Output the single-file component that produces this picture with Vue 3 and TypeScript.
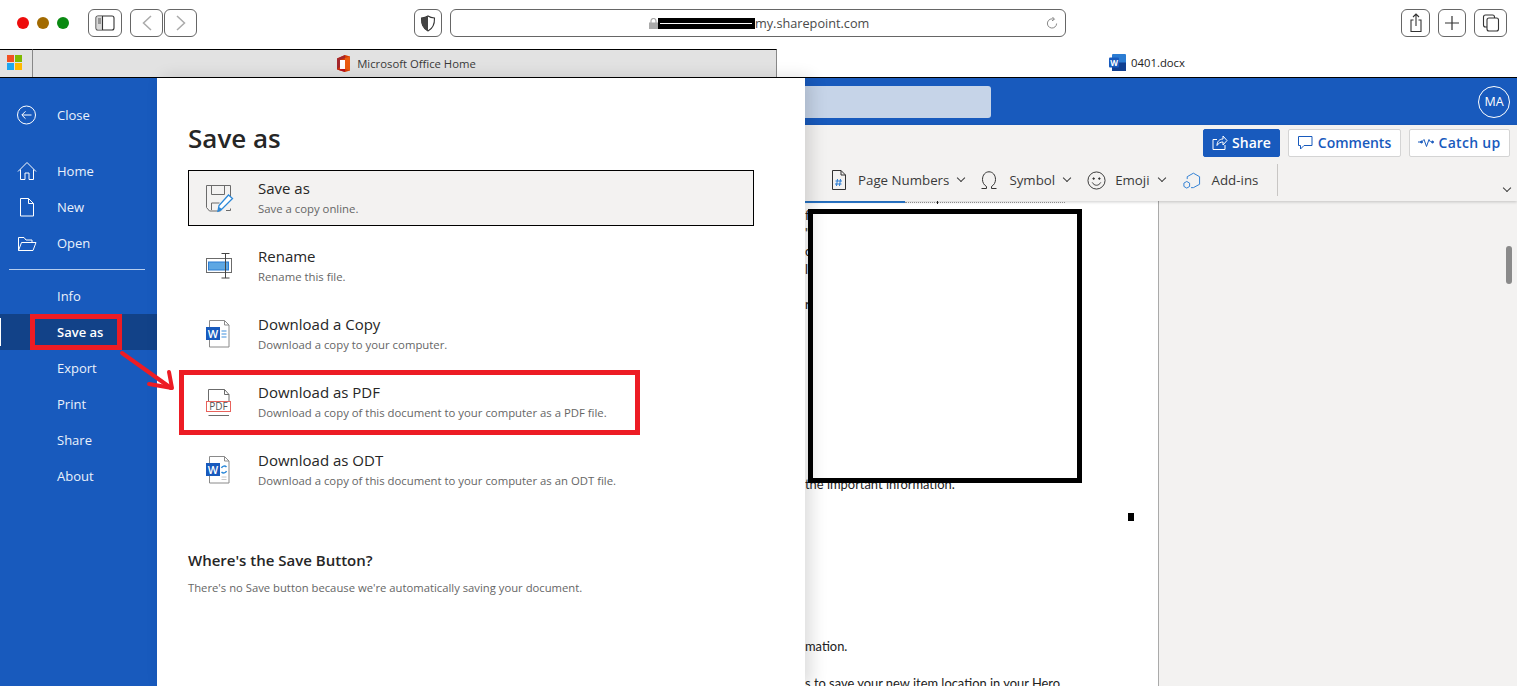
<script setup lang="ts">
const navTop = ['Home', 'New', 'Open']
const navBottom = ['Info', 'Save as', 'Export', 'Print', 'Share', 'About']
const options = [
  { id: 'save', title: 'Save as', sub: 'Save a copy online.' },
  { id: 'rename', title: 'Rename', sub: 'Rename this file.' },
  { id: 'copy', title: 'Download a Copy', sub: 'Download a copy to your computer.' },
  { id: 'pdf', title: 'Download as PDF', sub: 'Download a copy of this document to your computer as a PDF file.' },
  { id: 'odt', title: 'Download as ODT', sub: 'Download a copy of this document to your computer as an ODT file.' },
]
</script>

<template>
  <div class="page">
    <header class="chrome">
      <div class="lights">
        <span class="light red"></span>
        <span class="light amber"></span>
        <span class="light green"></span>
      </div>
      <button class="cbtn sidebar-btn" aria-label="Sidebar">
        <svg width="20" height="16" viewBox="0 0 20 16" fill="none">
          <rect x="1" y="1" width="18" height="14" rx="2" stroke="#333" stroke-width="1.1" />
          <rect x="1.5" y="1.5" width="6" height="13" fill="#d8d8d8" />
          <path d="M7.5 1v14" stroke="#333" stroke-width="1.1" />
          <path d="M3 4h3M3 6h3M3 8h3" stroke="#555" />
        </svg>
      </button>
      <div class="nav-pair">
        <button class="cbtn arrow-btn" aria-label="Back">
          <svg width="12" height="18" viewBox="0 0 12 18" fill="none"><path d="M10 2 2.500 9l7.500 7" stroke="#aaa" stroke-width="1.5" /></svg>
        </button>
        <button class="cbtn arrow-btn" aria-label="Forward">
          <svg width="12" height="18" viewBox="0 0 12 18" fill="none"><path d="M2 2l7.500 7L2 16" stroke="#aaa" stroke-width="1.5" /></svg>
        </button>
      </div>
      <button class="cbtn shield-btn" aria-label="Privacy">
        <svg width="16" height="17" viewBox="0 0 16 17" fill="none">
          <path d="M8 1c2 1.300 4 1.800 6.500 2 .2 6-1.500 10.500-6.500 13C3 13.500 1.300 9 1.500 3 4 2.800 6 2.300 8 1Z" stroke="#333" stroke-width="1.100" />
          <path d="M8 1C6 2.300 4 2.800 1.500 3 1.300 9 3 13.500 8 16V1Z" fill="#444" />
        </svg>
      </button>
      <div class="urlbar">
        <span class="url">
          <svg class="lock" width="9" height="11" viewBox="0 0 9 11"><path d="M2 5V3a2.500 2.500 0 0 1 5 0v2" fill="none" stroke="#aaa" stroke-width="1.200" /><rect y="4.500" width="9" height="6.500" fill="#aaa" /></svg>
          <span class="redact"><i></i></span><span class="host">my.sharepoint.com</span>
        </span>
        <svg class="reload" width="12" height="14" viewBox="0 0 12 14" fill="none">
          <path d="M8 3.300A4.600 4.600 0 1 0 10.600 7.500" stroke="#888" stroke-width="1" />
          <path d="M6.500 1 8.500 3.300 6 4.800" stroke="#888" stroke-width="1" />
        </svg>
      </div>
      <div class="chrome-right">
        <button class="cbtn tall" aria-label="Share">
          <svg width="14" height="20" viewBox="0 0 14 20" fill="none">
            <path d="M4.500 7H2v11.500h10V7H9.500M7 13V1.500M4 4l3-3 3 3" stroke="#333" stroke-width="1.100" />
          </svg>
        </button>
        <button class="cbtn plus" aria-label="New tab">
          <svg width="14" height="14" viewBox="0 0 14 14" fill="none"><path d="M7 0v14M0 7h14" stroke="#333" stroke-width="1.200" /></svg>
        </button>
        <button class="cbtn tabs-btn" aria-label="Tabs">
          <svg width="18" height="18" viewBox="0 0 18 18" fill="none">
            <rect x="1.500" y="1" width="11" height="12" rx="2" stroke="#333" stroke-width="1.100" />
            <rect x="5" y="4" width="11.500" height="13" rx="2" fill="#fff" stroke="#333" stroke-width="1.100" />
          </svg>
        </button>
      </div>
    </header>

    <div class="tabstrip">
      <div class="ms-logo" aria-label="Microsoft">
        <i class="q1"></i><i class="q2"></i><i class="q3"></i><i class="q4"></i>
      </div>
      <div class="tab inactive">
        <svg width="13" height="17" viewBox="0 0 13 17">
          <path d="M0 3.500 8 0l5 1.500v14L8 17l-8-2.500Z" fill="#d83b01" />
          <path d="M0 3.500 8 0v3L3 5v7l-3 2.500Z" fill="#a4262c" />
          <path d="M8 17l-8-2.500L8 14Z" fill="#b7121f" />
          <path d="M3 5h5v9H3Z" fill="#fff" />
          <path d="M8 3v11l5 1.500v-14Z" fill="#ea5b10" />
        </svg>
        <span>Microsoft Office Home</span>
      </div>
      <div class="tab active">
        <svg width="17" height="17" viewBox="0 0 17 17">
          <rect x="3" y="0" width="14" height="17" rx="1" fill="#2b7cd3" />
          <rect x="3" y="8.500" width="14" height="8.500" fill="#103f91" />
          <rect x="0" y="3.500" width="10" height="10" rx="1" fill="#185abd" />
          <text x="5" y="11.500" class="w-letter" text-anchor="middle">W</text>
        </svg>
        <span>0401.docx</span>
      </div>
    </div>

    <main class="workspace">
      <nav class="sidenav">
        <div class="nav-row close-row">
          <svg class="nav-icon" width="24" height="24" viewBox="0 0 24 24" fill="none" stroke="#fff">
            <circle cx="11.500" cy="12" r="9" />
            <path d="M16.500 12H7M10.500 8.300 6.800 12l3.700 3.700" />
          </svg>
          <span>Close</span>
        </div>
        <div v-for="n in navTop" :key="n" class="nav-row">
          <svg class="nav-icon" width="24" height="24" viewBox="0 0 24 24" fill="none" stroke="#fff">
            <path v-if="n === 'Home'" d="M3 12.500 12 3.500l9 9M5.500 10.500V20.500h4.500v-6.500h4v6.500h4.500V10.500" />
            <path v-else-if="n === 'New'" d="M5.500 3.500h8l5 5v12.500h-13ZM13.500 3.500v5h5" />
            <path v-else d="M3.500 19.500V6.500h5.500l2 2.500h6v2.500M3.500 19.500l3-8h14.500l-3 8Z" />
          </svg>
          <span>{{ n }}</span>
        </div>
        <hr class="nav-rule" />
        <div v-for="n in navBottom" :key="n" class="nav-row" :class="{ selected: n === 'Save as' }">
          <span class="nav-spacer"></span>
          <span>{{ n }}</span>
        </div>
      </nav>

      <section class="panel">
        <h1>Save as</h1>
        <ul class="options">
          <li v-for="o in options" :key="o.id" class="option" :class="{ current: o.id === 'save' }">
            <svg class="opt-icon" width="32" height="32" viewBox="0 0 32 32" fill="none">
              <g v-if="o.id === 'save'">
                <path d="M3.500 3.500h24v13M23 28.500h4.500v-2M3.500 3.500v22l3 3.500h11" stroke="#6b6b6b" />
                <path d="M8.500 3.500v9h13v-9M8.500 28v-7h8" stroke="#6b6b6b" />
                <path d="M15 29l1-5.500L25.500 13l4 3.500-10 10Z" fill="#fff" stroke="#2b88d8" stroke-width="1.300" />
                <path d="M14.500 30l2-5 3 3Z" fill="#2b88d8" />
              </g>
              <g v-else-if="o.id === 'rename'">
                <rect x="3.500" y="8.500" width="25" height="14" stroke="#6b6b6b" fill="#fff" />
                <rect x="5.500" y="12" width="20" height="8" fill="#5ea7e3" stroke="#2b7cd3" />
                <path d="M22.500 3.500v24.500M18.500 3.500h8M18.500 28h8" stroke="#444" />
              </g>
              <g v-else-if="o.id === 'pdf'">
                <path d="M5.500 15V3.500h16l4.500 5V15M21.500 3.500v5h4.500M5.500 29.500h20.500" stroke="#6b6b6b" />
                <rect x="3.500" y="15.500" width="24" height="10" fill="#fff" stroke="#e8625c" />
                <text x="15.500" y="24" class="pdf-letters" text-anchor="middle">PDF</text>
              </g>
              <g v-else>
                <path d="M6.500 2.500h15l4.500 4.500v22h-19.500ZM21.500 2.500v4.500h4.500" stroke="#8a8a8a" fill="#fff" />
                <rect x="3" y="9" width="14" height="13" fill="#185abd" />
                <text x="10" y="19.500" class="word-letter" text-anchor="middle">W</text>
                <path v-if="o.id === 'copy'" d="M18.500 13h5M18.500 16h5M18.500 19h5" stroke="#3f8fdc" />
                <g v-else>
                  <path d="M18.500 14a3 3 0 0 1 5-1M23.500 17a3 3 0 0 1-5 1" stroke="#2b88d8" stroke-width="1.400" />
                  <path d="M18.500 23h5M18.500 25.500h5" stroke="#c8c8c8" />
                </g>
              </g>
            </svg>
            <div class="opt-text">
              <div class="opt-title">{{ o.title }}</div>
              <div class="opt-sub">{{ o.sub }}</div>
            </div>
          </li>
        </ul>
        <h2>Where's the Save Button?</h2>
        <p>There's no Save button because we're automatically saving your document.</p>
      </section>

      <section class="word">
        <div class="appbar">
          <div class="search"></div>
          <div class="avatar">MA</div>
        </div>
        <div class="ribbon">
          <div class="actions">
            <button class="act primary">
              <svg width="16" height="18" viewBox="0 0 16 18" fill="none" stroke="#fff">
                <path d="M5 6.500H1v10h12V12M5 12.500C5 8.500 7.500 6 11 6V3l4 4.500L11 12V9c-2.500 0-4.500 1-6 3.500Z" />
              </svg>
              Share
            </button>
            <button class="act comments">
              <svg width="15" height="15" viewBox="0 0 15 15" fill="none" stroke="#185abd">
                <path d="M.5 1.500h13.500v9H6L2.500 14v-3.500H.5Z" />
              </svg>
              Comments
            </button>
            <button class="act catchup">
              <svg width="16" height="12" viewBox="0 0 16 12" fill="none" stroke="#185abd">
                <path d="M0 6h3M4 5.500l2-2 2.500 7 2.500-7 1.500 2.500" />
                <circle cx="3.500" cy="6" r="1" fill="#185abd" />
                <circle cx="14.500" cy="6" r="1" fill="#185abd" />
              </svg>
              Catch up
            </button>
          </div>
          <div class="tools">
            <div class="tool">
              <svg class="ic-page" width="16" height="20" viewBox="0 0 16 20" fill="none">
                <path d="M1.500 .500h8.500l4.500 4.500v14.500h-13ZM10 .500v4.500h4.500" stroke="#333" />
                <path d="M6.500 9l-1 7M9.500 9l-1 7M4.500 11h6.500M4 14h6.500" stroke="#2b7cd3" />
              </svg>
              <span>Page Numbers</span><i class="chev"></i>
            </div>
            <div class="tool">
              <svg class="ic-omega" width="16" height="18" viewBox="0 0 16 18" fill="none" stroke="#333">
                <path d="M.5 17.500h5v-2C3 14 1.500 11.500 1.500 8.500 1.500 4 4.300 .8 8 .8s6.500 3.200 6.500 7.700c0 3-1.500 5.500-4 7v2h5" />
              </svg>
              <span>Symbol</span><i class="chev"></i>
            </div>
            <div class="tool">
              <svg class="ic-emoji" width="19" height="19" viewBox="0 0 20 20" fill="none" stroke="#333">
                <circle cx="10" cy="10" r="9" />
                <circle cx="7" cy="8" r=".8" fill="#333" /><circle cx="13" cy="8" r=".8" fill="#333" />
                <path d="M5.500 12c1.200 2 2.700 3 4.500 3s3.300-1 4.500-3" />
              </svg>
              <span>Emoji</span><i class="chev"></i>
            </div>
            <div class="tool">
              <svg class="ic-addin" width="19" height="19" viewBox="0 0 20 20" fill="none" stroke="#2b7cd3">
                <path d="M5.500 8.500V6L12 2.300 18.500 6v8L12 17.500H9.500" />
                <path d="M5 11l3 1.750v3.500L5 18l-3-1.750v-3.500Z" />
              </svg>
              <span>Add-ins</span>
            </div>
            <span class="tool-sep"></span>
            <i class="chev collapse"></i>
          </div>
        </div>
        <div class="docarea">
          <div class="docpage">
            <div class="link-stub"></div>
            <div class="dotted-stub"></div>
            <div class="tick"></div>
            <div class="line first">f</div>
            <div class="line">"</div>
            <div class="line">c</div>
            <div class="line">li</div>
            <div class="line gap-small">r</div>
            <div class="line gap-large">the important information.</div>
            <div class="marker"></div>
            <div class="line gap-mation">mation.</div>
            <div class="line gap-two">s to save your new item location in your Hero</div>
            <div class="redaction"></div>
          </div>
          <aside class="rail"><span class="thumb"></span></aside>
        </div>
      </section>
    </main>

    <div class="mark mark-nav"></div>
    <div class="mark mark-pdf"></div>
    <svg class="mark-arrow" width="64" height="50" viewBox="0 0 64 50" fill="none" stroke="#ed1c24" stroke-width="4" stroke-linecap="round" stroke-linejoin="round">
      <path d="M3 3 52 38" />
      <path d="M50 22 53 38 30 34" />
    </svg>
  </div>
</template>

<style>
html, body { margin: 0; background: #fff; overflow: hidden; }
</style>

<style scoped>
.page {
  position: relative;
  width: 1517px;
  height: 686px;
  overflow: hidden;
  display: flex;
  flex-direction: column;
  font-family: "Open Sans", "Noto Sans", sans-serif;
  color: #262626;
  background: #fff;
}
button { font-family: inherit; background: #fff; padding: 0; }

.chrome {
  height: 49px;
  flex: none;
  display: flex;
  align-items: flex-start;
  padding-top: 9px;
  box-sizing: border-box;
  background: #fff;
}
.lights { display: flex; gap: 8px; margin: 8px 0 0 17px; }
.light { width: 12px; height: 12px; border-radius: 50%; }
.red { background: #ee0c0c; }
.amber { background: #a26a00; }
.green { background: #0a8a12; }
.cbtn {
  height: 28px;
  box-sizing: border-box;
  border: 1px solid #666;
  border-radius: 6px;
  display: flex;
  align-items: center;
  justify-content: center;
}
.sidebar-btn { width: 34px; margin-left: 19px; }
.nav-pair { display: flex; margin-left: 8px; gap: 1px; }
.arrow-btn { width: 33px; }
.shield-btn { width: 28px; margin-left: 217px; }
.urlbar {
  width: 616px;
  height: 28px;
  box-sizing: border-box;
  margin-left: 8px;
  border: 1px solid #666;
  border-radius: 6px;
  display: flex;
  align-items: center;
  position: relative;
}
.url {
  margin-left: 198px;
  display: flex;
  align-items: center;
  font-size: 12.700px;
  color: #4a4a4a;
  line-height: 16px;
}
.lock { margin-right: 0; }
.redact {
  width: 97px;
  height: 11px;
  background: #000;
  display: flex;
  align-items: center;
}
.redact i { display: block; width: 92px; height: 1px; margin-left: 2px; background: #fff; }
.reload { position: absolute; right: 7px; top: 6px; }
.chrome-right { display: flex; gap: 8px; margin-left: 335px; }
.tall { width: 29px; }
.plus { width: 28px; }
.tabs-btn { width: 33px; }

.tabstrip {
  height: 29px;
  flex: none;
  box-sizing: border-box;
  display: flex;
  border-bottom: 1px solid #000;
  position: relative;
}
.ms-logo {
  width: 33px;
  box-sizing: border-box;
  background: #e2e2e2;
  border-top: 1px solid #000;
  border-right: 1px solid #888;
  display: grid;
  grid-template-columns: 7px 7px;
  grid-auto-rows: 7px;
  gap: 1px;
  padding: 5px 0 0 7px;
}
.ms-logo i { display: block; }
.q1 { background: #f25022; }
.q2 { background: #7fba00; }
.q3 { background: #1ea7f0; }
.q4 { background: #ffb900; }
.tab {
  display: flex;
  align-items: center;
  justify-content: center;
  gap: 7px;
  font-size: 11.300px;
  color: #3a3a3a;
  box-sizing: border-box;
  padding-bottom: 1px;
}
.tab.inactive {
  width: 744px;
  background: #e2e2e2;
  border-top: 1px solid #000;
  border-right: 1px solid #888;
  padding-left: 4px;
}
.tab.active { flex: 1; gap: 5px; color: #222; }
.w-letter { font: 700 8px "Open Sans", sans-serif; fill: #fff; }

.workspace { flex: 1; display: flex; min-height: 0; }

.sidenav {
  width: 157px;
  flex: none;
  background: #185abd;
  color: #fff;
  padding-top: 19px;
  box-sizing: border-box;
  font-size: 13px;
}
.nav-row {
  height: 36px;
  display: flex;
  align-items: center;
  padding-left: 15px;
  gap: 18px;
  color: #eaf1fb;
  box-sizing: border-box;
  position: relative;
}
.close-row { margin-bottom: 20px; }
.nav-icon { flex: none; }
.nav-spacer { width: 24px; flex: none; }
.nav-rule { border: 0; height: 1px; background: #b6cdee; margin: 8px 12px 8px 9px; }
.nav-row.selected {
  background: #124288;
  color: #fff;
  font-weight: 600;
}
.nav-row.selected::before {
  content: "";
  position: absolute;
  left: 0;
  top: 4px;
  bottom: 4px;
  width: 1px;
  background: #fff;
}

.panel {
  width: 648px;
  flex: none;
  background: #fff;
  padding: 0 0 0 31px;
  box-sizing: border-box;
  position: relative;
  z-index: 3;
  box-shadow: 6px 0 16px rgba(0, 0, 0, 0.14);
}
h1 { font-size: 26px; font-weight: 600; margin: 43px 0 14px; line-height: 35px; color: #262626; }
.options { list-style: none; margin: 0; padding: 0; display: flex; flex-direction: column; gap: 12px; width: 566px; }
.option {
  height: 56px;
  box-sizing: border-box;
  display: flex;
  align-items: center;
  padding-left: 15px;
  gap: 23px;
}
.option.current { background: #f3f2f1; border: 1px solid #000; padding-left: 14px; }
.opt-icon { flex: none; }
.opt-title { font-size: 15px; line-height: 20px; color: #262626; position: relative; top: -1px; }
.opt-sub { font-size: 11.350px; line-height: 16px; margin-top: 2px; color: #666; }
.pdf-letters { font: 400 10px "Open Sans", sans-serif; fill: #555; }
.word-letter { font: 600 11px "Open Sans", sans-serif; fill: #fff; }
h2 { font-size: 15px; font-weight: 600; margin: 52px 0 0; line-height: 20px; color: #262626; }
p { font-size: 11.270px; line-height: 16px; margin: 10px 0 0; color: #666; }

.word { flex: 1; min-width: 0; display: flex; flex-direction: column; }
.appbar {
  height: 47px;
  flex: none;
  background: #185abd;
  display: flex;
  align-items: center;
  justify-content: space-between;
  padding-right: 7px;
  box-sizing: border-box;
}
.search { width: 186px; height: 32px; background: #c6d4e8; border-radius: 0 3px 3px 0; }
.avatar {
  width: 32px;
  height: 32px;
  box-sizing: border-box;
  border: 1px solid #fff;
  border-radius: 50%;
  color: #fff;
  font-size: 12.500px;
  display: flex;
  align-items: center;
  justify-content: center;
}
.ribbon {
  height: 76px;
  flex: none;
  background: #f3f2f1;
  box-shadow: 0 1px 3px rgba(0, 0, 0, 0.2);
  position: relative;
  z-index: 2;
}
.actions { display: flex; justify-content: flex-end; gap: 8px; padding: 4px 7px 0 0; }
.act {
  width: 113px;
  height: 28px;
  box-sizing: border-box;
  border: 1px solid #d4d4d4;
  background: #fff;
  color: #185abd;
  font-size: 14px;
  font-weight: 600;
  display: flex;
  align-items: center;
  justify-content: center;
  gap: 5px;
  border-radius: 2px;
  padding-bottom: 2px;
}
.act.primary { width: 77px; background: #185abd; border-color: #185abd; color: #fff; gap: 4px; }
.act.catchup { width: 101px; letter-spacing: 0.3px; gap: 4px; }
.tools {
  display: flex;
  align-items: center;
  height: 34px;
  margin-top: 6px;
  padding-left: 26px;
  font-size: 13.300px;
  color: #3a3a3a;
  position: relative;
}
.tool { display: flex; align-items: center; margin-right: 17px; height: 32px; }
.ic-page { margin-right: 11px; }
.ic-omega { margin-right: 12px; }
.ic-emoji { margin-right: 9px; }
.ic-addin { margin-right: 11px; }
.chev {
  display: block;
  box-sizing: border-box;
  width: 6px;
  height: 6px;
  border-right: 1px solid #333;
  border-bottom: 1px solid #333;
  transform: rotate(45deg) translate(-1.500px, -1.500px);
  margin-left: 9px;
}
.tool-sep { width: 1px; height: 32px; background: #c8c6c4; margin-left: 2px; }
.collapse { position: absolute; right: 7px; bottom: 4px; margin: 0; }
.docarea { flex: 1; display: flex; min-height: 0; }
.docpage {
  width: 353px;
  flex: none;
  background: #fff;
  position: relative;
  overflow: hidden;
  padding-top: 5px;
  box-sizing: border-box;
  font-family: Lato, "Open Sans", sans-serif;
  font-size: 12.900px;
  color: #222;
}
.link-stub { height: 2px; width: 100px; background: #2b7cd3; position: absolute; left: 0; top: 0; }
.dotted-stub { width: 160px; border-top: 1px dotted #999; position: absolute; left: 100px; top: 1px; }
.tick { width: 1px; height: 3px; background: #222; position: absolute; left: 132px; top: 0; }
.line { line-height: 18px; white-space: nowrap; }
.gap-small { margin-top: 17px; }
.gap-large { margin-top: 162px; }
.gap-mation { margin-top: 144px; }
.gap-two { margin-top: 19px; }
.marker { position: absolute; left: 323px; top: 312px; width: 6px; height: 8px; background: #000; }
.redaction {
  position: absolute;
  left: 3px;
  top: 8px;
  width: 274px;
  height: 274px;
  box-sizing: border-box;
  border: 5px solid #000;
  background: #fff;
}
.rail {
  flex: 1;
  background: #f3f2f1;
  border-left: 1px solid #aaa;
  position: relative;
}
.thumb {
  position: absolute;
  left: 347px;
  top: 45px;
  width: 6px;
  height: 38px;
  border-radius: 3px;
  background: #8a8a8a;
}
.mark { position: absolute; box-sizing: border-box; border: 5px solid #ed1c24; z-index: 5; }
.mark-nav { left: 30px; top: 314px; width: 92px; height: 36px; }
.mark-pdf { left: 179px; top: 370px; width: 461px; height: 65px; }
.mark-arrow { position: absolute; left: 119px; top: 350px; z-index: 5; }
</style>
